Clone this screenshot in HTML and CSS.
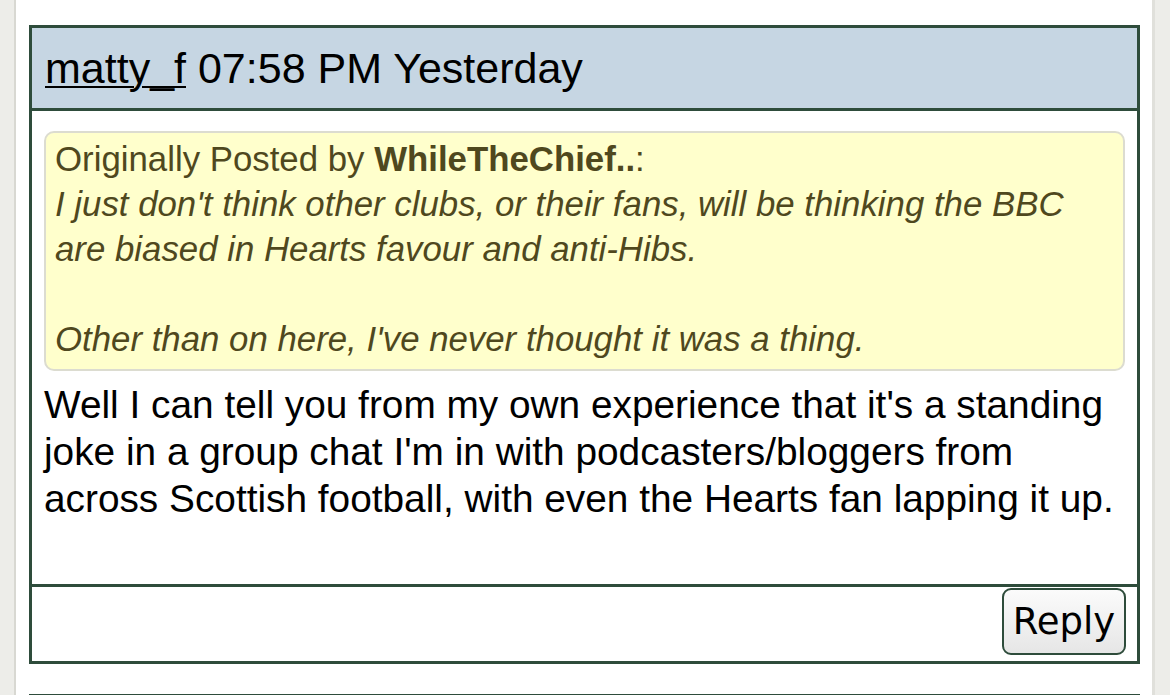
FILE: index.html
```html
<!DOCTYPE html>
<html>
<head>
<meta charset="utf-8">
<link rel="stylesheet" href="styles.css">
</head>
<body>
<div class="page">
  <div class="post">
    <div class="post-head"><a class="user" href="#">matty_f</a> 07:58 PM Yesterday</div>
    <div class="post-body">
      <div class="quote">
        <div class="quote-by">Originally Posted by <b>WhileTheChief..</b>:</div>
        <div class="quote-text">I just don't think other clubs, or their fans, will be thinking the BBC are biased in Hearts favour and anti-Hibs.<br><br>Other than on here, I've never thought it was a thing.</div>
      </div>
      <div class="message">Well I can tell you from my own experience that it's a standing joke in a group chat I'm in with podcasters/bloggers from across Scottish football, with even the Hearts fan lapping it up.</div>
    </div>
    <div class="post-foot"><button class="reply">Reply</button></div>
  </div>
  <div class="post next"></div>
</div>
</body>
</html>
```
FILE: styles.css
```css
html, body {
  margin: 0;
  padding: 0;
}
body {
  background: #ededE9;
  font-family: "Liberation Sans", Arial, sans-serif;
  color: #000;
  height: 695px;
  overflow: hidden;
}
.page {
  margin-left: 14px;
  width: 1141px;
  border-left: 2px solid #d8d8d2;
  border-right: 3px solid #e0e0db;
  background: #fff;
  padding: 25px 12px 0 13px;
  min-height: 695px;
  box-sizing: border-box;
}
.post {
  border: 3px solid #2e4c3b;
  background: #fff;
}
.post-head {
  background: #c6d6e3;
  border-bottom: 3px solid #2e4c3b;
  height: 80px;
  box-sizing: content-box;
  display: flex;
  align-items: center;
  padding: 0 13px;
  font-size: 43px;
  white-space: pre;
}
.user {
  color: #000;
  text-decoration: underline;
  text-decoration-thickness: 2px;
  text-underline-offset: 3px;
}
.post-body {
  padding: 20px 12px 62px 12px;
  border-bottom: 3px solid #2e4c3b;
}
.quote {
  background: #ffffcc;
  border: 2px solid #dcdcd0;
  border-radius: 10px;
  padding: 3px 10px 8px 9px;
  color: #4f481e;
  font-size: 34.8px;
  line-height: 45px;
  margin-bottom: 10px;
}
.quote-text {
  font-style: italic;
}
.message {
  font-size: 38.8px;
  line-height: 47px;
}
.post-foot {
  height: 74px;
  display: flex;
  justify-content: flex-end;
  align-items: flex-start;
  padding: 1px 11px 0 0;
  box-sizing: border-box;
}
.reply {
  height: 67px;
  width: 124px;
  border: 2px solid #2e4c3b;
  border-radius: 9px;
  background: linear-gradient(#fbfbfb, #e6e6e6);
  font-family: "DejaVu Sans", sans-serif;
  font-size: 37px;
  color: #000;
  padding: 0;
}
.post.next {
  margin-top: 30px;
  height: 20px;
  border-bottom: none;
  border-left: none;
  border-right: none;
  border-top: 2px solid #2e4c3b;
}
```
